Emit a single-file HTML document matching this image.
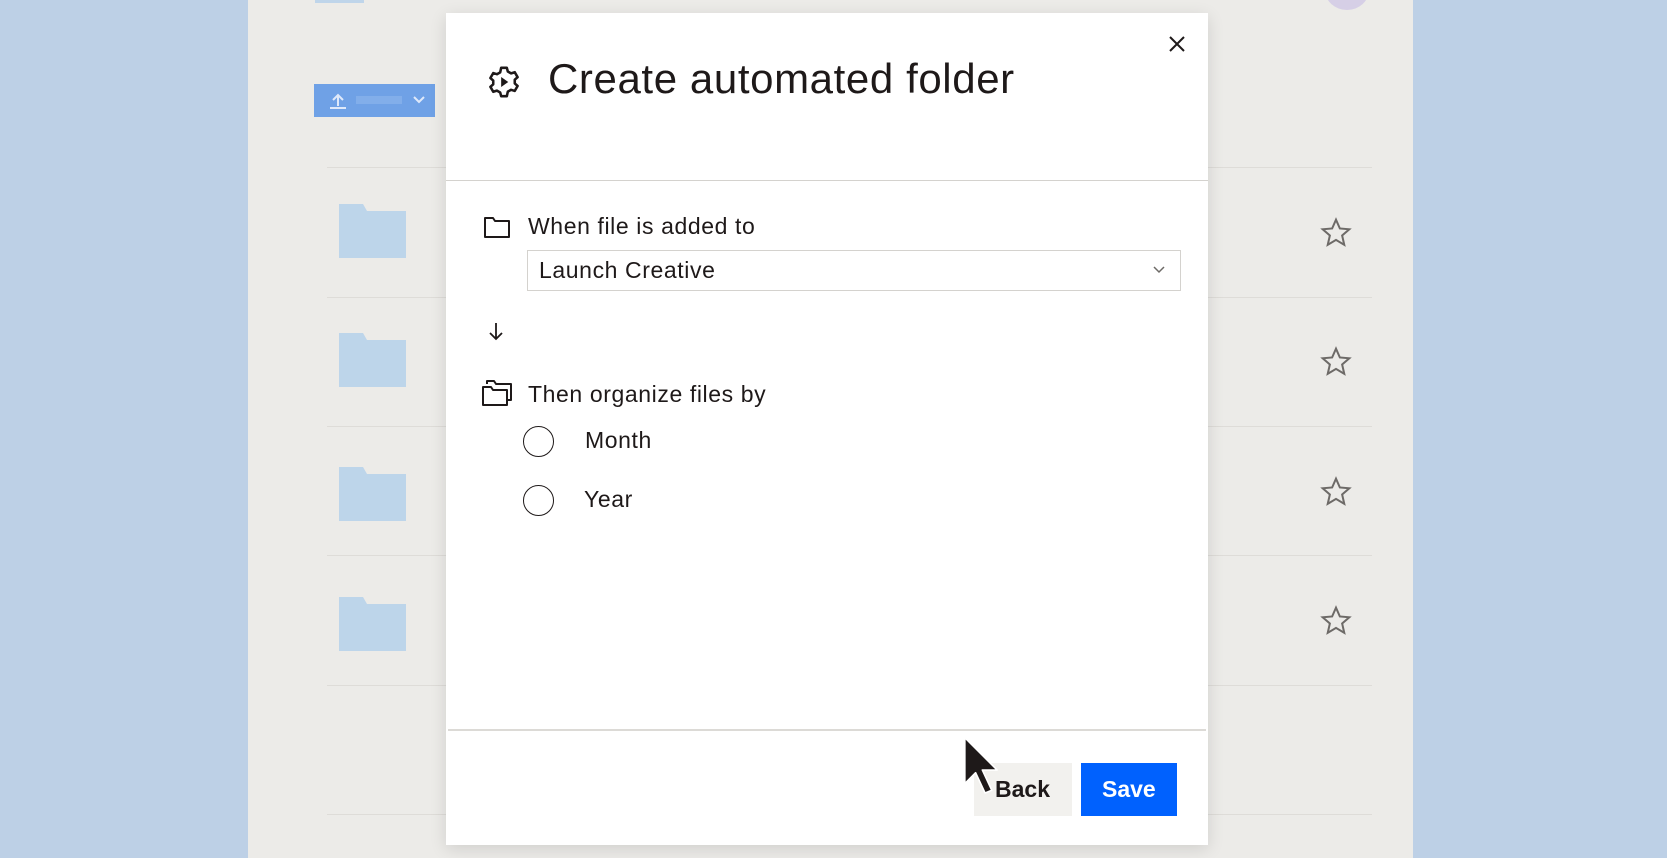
<!DOCTYPE html>
<html><head><style>
body{margin:0;width:1667px;height:858px;position:relative;overflow:hidden;background:#bdd0e6;font-family:"Liberation Sans",sans-serif;}
.panel{position:absolute;left:248px;top:0;width:1165px;height:858px;background:#ecebe8;}
.abs{position:absolute;}
.line{position:absolute;left:327px;width:1045px;height:1px;background:#dedcd8;}
.fold{position:absolute;left:339px;width:67px;height:54px;}
.star{position:absolute;left:1320px;width:32px;height:32px;}
.modal{position:absolute;left:446px;top:13px;width:762px;height:832px;background:#fff;box-shadow:0 4px 16px rgba(0,0,0,0.12);}
.t{position:absolute;color:#1e1919;white-space:nowrap;}
.b{font-size:23px;letter-spacing:0.6px;}
</style></head><body>
<div class="panel"></div>
<div class="abs" style="left:315px;top:0;width:49px;height:3px;background:#bfd5ea"></div>
<div class="abs" style="left:1325px;top:-30px;width:44px;height:40px;border-radius:50%;background:#d6cfe6"></div>
<div class="abs" style="left:314px;top:84px;width:121px;height:33px;background:#6fa1e6"></div>
<svg class="abs" style="left:328px;top:92px" width="20" height="18"><path d="M10 14V3M5 8l5-5 5 5M2 16h16" stroke="#dfe9fa" stroke-width="2" fill="none"/></svg>
<div class="abs" style="left:356px;top:96px;width:46px;height:8px;background:#82aeea"></div>
<svg class="abs" style="left:413px;top:96px" width="12" height="8"><path d="M1 1l5 5 5-5" stroke="#dfe9fa" stroke-width="2" fill="none"/></svg>
<div class="line" style="top:167px"></div><div class="line" style="top:297px"></div><div class="line" style="top:426px"></div><div class="line" style="top:555px"></div><div class="line" style="top:685px"></div><div class="line" style="top:814px"></div>
<svg class="fold" style="top:204px" viewBox="0 0 67 54"><path d="M0 0h24l4 7h39v47H0z" fill="#bdd5ea"/></svg>
<svg class="fold" style="top:333px" viewBox="0 0 67 54"><path d="M0 0h24l4 7h39v47H0z" fill="#bdd5ea"/></svg>
<svg class="fold" style="top:467px" viewBox="0 0 67 54"><path d="M0 0h24l4 7h39v47H0z" fill="#bdd5ea"/></svg>
<svg class="fold" style="top:597px" viewBox="0 0 67 54"><path d="M0 0h24l4 7h39v47H0z" fill="#bdd5ea"/></svg>
<svg class="star" style="top:217px" viewBox="0 0 24 24"><path d="M12 2l2.9 6.6 7.1.6-5.4 4.7 1.6 7-6.2-3.7-6.2 3.7 1.6-7L2 9.2l7.1-.6z" fill="none" stroke="#6d6a67" stroke-width="1.5"/></svg>
<svg class="star" style="top:346px" viewBox="0 0 24 24"><path d="M12 2l2.9 6.6 7.1.6-5.4 4.7 1.6 7-6.2-3.7-6.2 3.7 1.6-7L2 9.2l7.1-.6z" fill="none" stroke="#6d6a67" stroke-width="1.5"/></svg>
<svg class="star" style="top:476px" viewBox="0 0 24 24"><path d="M12 2l2.9 6.6 7.1.6-5.4 4.7 1.6 7-6.2-3.7-6.2 3.7 1.6-7L2 9.2l7.1-.6z" fill="none" stroke="#6d6a67" stroke-width="1.5"/></svg>
<svg class="star" style="top:605px" viewBox="0 0 24 24"><path d="M12 2l2.9 6.6 7.1.6-5.4 4.7 1.6 7-6.2-3.7-6.2 3.7 1.6-7L2 9.2l7.1-.6z" fill="none" stroke="#6d6a67" stroke-width="1.5"/></svg>

<div class="modal">
 <svg class="abs" style="left:722px;top:22px" width="18" height="18"><path d="M2 2l14 14M16 2L2 16" stroke="#1e1919" stroke-width="2"/></svg>
 <svg class="abs" style="left:41px;top:52px" width="34" height="34" viewBox="0 0 24 24"><path d="M10 2h4l.7 2.6 2.3 1.3 2.6-.8 2 3.5-2 1.8v2.6l2 1.8-2 3.5-2.6-.8-2.3 1.3L14 22h-4l-.7-2.6-2.3-1.3-2.6.8-2-3.5 2-1.8v-2.6l-2-1.8 2-3.5 2.6.8 2.3-1.3z" fill="none" stroke="#1e1919" stroke-width="1.8" stroke-linejoin="round"/><path d="M10 8.5v7l5-3.5z" fill="#1e1919"/></svg>
 <div class="t" style="left:102px;top:42px;font-size:42px;letter-spacing:0.6px;">Create automated folder</div>
 <div class="abs" style="left:0;top:167px;width:762px;height:1px;background:#d4d2ce"></div>
 <svg class="abs" style="left:37px;top:202px" width="28" height="24"><path d="M2 3h8l2 3h14v16H2z" fill="none" stroke="#1e1919" stroke-width="2" stroke-linejoin="round"/></svg>
 <div class="t b" style="left:82px;top:200px;">When file is added to</div>
 <div class="abs" style="left:81px;top:237px;width:652px;height:39px;border:1px solid #d4d2ce;"></div>
 <div class="t b" style="left:93px;top:244px;">Launch Creative</div>
 <svg class="abs" style="left:707px;top:253px" width="12" height="8"><path d="M1 1l5 5 5-5" stroke="#6d6a67" stroke-width="1.5" fill="none"/></svg>
 <svg class="abs" style="left:42px;top:309px" width="16" height="20"><path d="M8 1v16M2 11l6 6 6-6" stroke="#1e1919" stroke-width="1.8" fill="none"/></svg>
 <svg class="abs" style="left:35px;top:366px" width="34" height="28"><path d="M2 8h8l2 3h14v15H2z" fill="none" stroke="#1e1919" stroke-width="2" stroke-linejoin="round"/><path d="M6 5V2h7l2 3h15v16h-4" fill="none" stroke="#1e1919" stroke-width="2" stroke-linejoin="round"/></svg>
 <div class="t b" style="left:82px;top:368px;">Then organize files by</div>
 <div class="abs" style="left:77px;top:413px;width:29px;height:29px;border:1.7px solid #1e1919;border-radius:50%;"></div>
 <div class="t b" style="left:139px;top:414px;">Month</div>
 <div class="abs" style="left:77px;top:472px;width:29px;height:29px;border:1.7px solid #1e1919;border-radius:50%;"></div>
 <div class="t b" style="left:138px;top:473px;">Year</div>
 <div class="abs" style="left:2px;top:716px;width:758px;height:2px;background:#dcdad6"></div>
 <div class="abs" style="left:528px;top:750px;width:98px;height:53px;background:#f2f1ee"></div>
 <div class="t" style="left:549px;top:763px;font-size:23px;font-weight:bold;">Back</div>
 <div class="abs" style="left:635px;top:750px;width:96px;height:53px;background:#0061fe"></div>
 <div class="t" style="left:656px;top:763px;font-size:23px;font-weight:bold;color:#fff;">Save</div>
 <svg class="abs" style="left:514px;top:722px" width="42" height="62" viewBox="0 0 30 46"><path d="M3 2v34l8-8 7 15 5-2-7-15h11z" fill="#1e1919" stroke="#fff" stroke-width="1.2" stroke-linejoin="round"/></svg>
</div>
</body></html>
